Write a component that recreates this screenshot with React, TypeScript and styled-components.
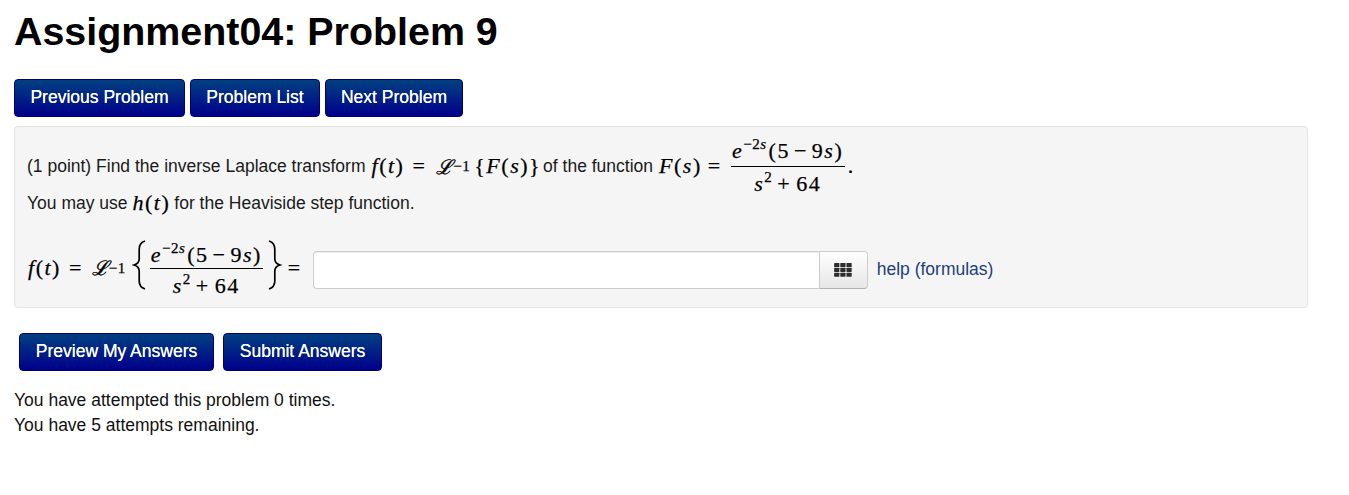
import React from "react";
import styled, { createGlobalStyle } from "styled-components";

const Global = createGlobalStyle`
  html, body { margin: 0; padding: 0; background: #fff; }
  body { font-family: "Liberation Sans", Arial, sans-serif; font-size: 17.5px; color: #1a1a1a; }
`;

const Page = styled.main`
  width: 1322px;
  padding: 0 0 0 14px;
  box-sizing: border-box;
`;

const Title = styled.h1`
  margin: 0;
  padding-top: 8px;
  height: 79px;
  box-sizing: border-box;
  font-size: 39.4px;
  line-height: 46px;
  font-weight: 700;
  color: #000;
`;

const ButtonRow = styled.nav`
  display: flex;
  gap: 5px;
`;

const BlueButton = styled.button<{ $w: number }>`
  width: ${(p) => p.$w}px;
  height: 38px;
  padding: 0 0 2px;
  box-sizing: border-box;
  border: 1px solid #00006e;
  border-radius: 4px;
  background: linear-gradient(#004080, #00008b);
  color: #fff;
  font: 400 17.5px "Liberation Sans", Arial, sans-serif;
  text-shadow: 0 0 0.4px #fff;
  white-space: nowrap;
`;

const Panel = styled.section`
  margin-top: 9px;
  width: 1294px;
  height: 182px;
  box-sizing: border-box;
  padding: 14px 12px 0;
  background: #f5f5f5;
  border: 1px solid #e3e3e3;
  border-radius: 4px;
`;

const ProblemLine = styled.div<{ $h: number }>`
  display: flex;
  align-items: center;
  white-space: pre;
  height: ${(p) => p.$h}px;
`;

const Math = styled.span<{ $l?: number; $r?: number; $lift?: number }>`
  display: inline-flex;
  align-items: center;
  margin: 0 ${(p) => p.$r ?? 0}px 0 ${(p) => p.$l ?? 0}px;
  padding-bottom: ${(p) => p.$lift ?? 0}px;
  font-family: "Liberation Serif", "DejaVu Serif", serif;
  font-size: 22px;
  letter-spacing: 1.5px;
  color: #000;
  white-space: pre;
  -webkit-text-stroke: 0.25px #000;
`;

const V = styled.i`
  font-style: italic;
`;

const Rel = styled.span<{ $l: number; $r: number }>`
  margin: 0 ${(p) => p.$r}px 0 ${(p) => p.$l}px;
`;

const Script = styled.span`
  font-family: "DejaVu Serif", serif;
  font-style: italic;
  font-size: 20px;
  letter-spacing: 0;
  -webkit-text-stroke: 0.4px #000;
`;

const Sup = styled.sup`
  font-size: 15px;
  letter-spacing: 0.5px;
  line-height: 0;
  vertical-align: 9px;
`;

const Fraction = styled.span<{ $w: number }>`
  display: inline-flex;
  flex-direction: column;
  align-items: center;
  width: ${(p) => p.$w}px;
`;

const Num = styled.span<{ $top: number }>`
  box-sizing: border-box;
  height: 32px;
  padding-top: ${(p) => p.$top}px;
  line-height: 30px;
  white-space: pre;
`;

const Den = styled.span`
  align-self: stretch;
  text-align: center;
  box-sizing: border-box;
  border-top: 1.4px solid #000;
  line-height: 34px;
  height: 32px;
  white-space: pre;
`;

const AnswerRow = styled(ProblemLine)`
  margin-top: 29px;
`;

const InputGroup = styled.div`
  display: flex;
  margin: 0 9px 0 11px;
`;

const AnswerInput = styled.input`
  width: 506px;
  height: 38px;
  box-sizing: border-box;
  background: #fff;
  border: 1px solid #ccc;
  border-right: 0;
  border-radius: 4px 0 0 4px;
  box-shadow: inset 0 1px 1px rgba(0, 0, 0, 0.075);
`;

const GridButton = styled.button`
  width: 49px;
  height: 38px;
  padding: 0;
  display: flex;
  align-items: center;
  justify-content: center;
  box-sizing: border-box;
  border: 1px solid #ccc;
  border-bottom-color: #b3b3b3;
  border-radius: 0 4px 4px 0;
  background: linear-gradient(#fff, #e6e6e6);
`;

const HelpLink = styled.a`
  padding-bottom: 2px;
  color: #1c3f7c;
  font-size: 17.5px;
  text-decoration: none;
`;

const SubmitRow = styled(ButtonRow)`
  gap: 9px;
  margin: 25px 0 0 5px;
`;

const Status = styled.p`
  margin: 17px 0 0;
  line-height: 25px;
  color: #111;
`;

const Brace = ({ flip }: { flip?: boolean }) => (
  <svg width="16" height="50" viewBox="0 0 16 50" style={flip ? { transform: "scaleX(-1)" } : undefined}>
    <path
      d="M13 1C8.500 2.500 7.200 5 7.200 9V19C7.200 22 5.500 24 2 25C5.500 26 7.200 28 7.200 31V41C7.200 45 8.500 47.500 13 49"
      fill="none"
      stroke="#000"
      strokeWidth="1.700"
    />
  </svg>
);

const GridIcon = () => (
  <svg width="18" height="14" viewBox="0 0 19 15" fill="#2d2d2d">
    {[0, 5.2, 10.4].map((y) =>
      [0, 6.6, 13.2].map((x) => <rect key={`${x}-${y}`} x={x} y={y} width="5.6" height="4.4" rx="0.5" />)
    )}
  </svg>
);

const FractionBody = ({ w, top }: { w: number; top: number }) => (
  <Fraction $w={w}>
    <Num $top={top}>
      <V>e</V>
      <Sup>
        −2<V>s</V>
      </Sup>
      <Rel $l={2} $r={0}>(5</Rel>
      <Rel $l={4} $r={4}>−</Rel>9<V>s</V>)
    </Num>
    <Den>
      <V>s</V>
      <Sup>2</Sup>
      <Rel $l={5} $r={5}>+</Rel>64
    </Den>
  </Fraction>
);

export default function App() {
  return (
    <Page>
      <Global />
      <Title>Assignment04: Problem 9</Title>
      <ButtonRow>
        <BlueButton $w={171}>Previous Problem</BlueButton>
        <BlueButton $w={130}>Problem List</BlueButton>
        <BlueButton $w={138}>Next Problem</BlueButton>
      </ButtonRow>
      <Panel>
        <ProblemLine $h={50}>
          (1 point) Find the inverse Laplace transform
          <Math $l={6} $r={2}>
            <V>f</V>(<V>t</V>)<Rel $l={8} $r={10}>=</Rel>
            <Script>ℒ</Script>
            <Sup>−1</Sup>
            <Rel $l={4} $r={0}>{"{"}</Rel>
            <V>F</V>(<V>s</V>){"}"}
          </Math>
          of the function
          <Math $l={6} $r={6}>
            <V>F</V>(<V>s</V>)<Rel $l={6} $r={9}>=</Rel>
            <FractionBody w={114} top={2} />
            <Rel $l={3} $r={0}>.</Rel>
          </Math>
        </ProblemLine>
        <ProblemLine $h={24}>
          You may use
          <Math $l={5} $r={4}>
            <V>h</V>(<V>t</V>)
          </Math>
          for the Heaviside step function.
        </ProblemLine>
        <AnswerRow $h={52}>
          <Math $l={1} $lift={5}>
            <V>f</V>(<V>t</V>)<Rel $l={8} $r={9}>=</Rel>
            <Script>ℒ</Script>
            <Sup>−1</Sup>
            <Rel $l={6} $r={2}><Brace /></Rel>
            <FractionBody w={113} top={4} />
            <Rel $l={3} $r={6}><Brace flip /></Rel>=
          </Math>
          <InputGroup>
            <AnswerInput aria-label="answer" />
            <GridButton aria-label="equation editor">
              <GridIcon />
            </GridButton>
          </InputGroup>
          <HelpLink href="#">help (formulas)</HelpLink>
        </AnswerRow>
      </Panel>
      <SubmitRow>
        <BlueButton $w={195}>Preview My Answers</BlueButton>
        <BlueButton $w={159}>Submit Answers</BlueButton>
      </SubmitRow>
      <Status>
        You have attempted this problem 0 times.
        <br />
        You have 5 attempts remaining.
      </Status>
    </Page>
  );
}
